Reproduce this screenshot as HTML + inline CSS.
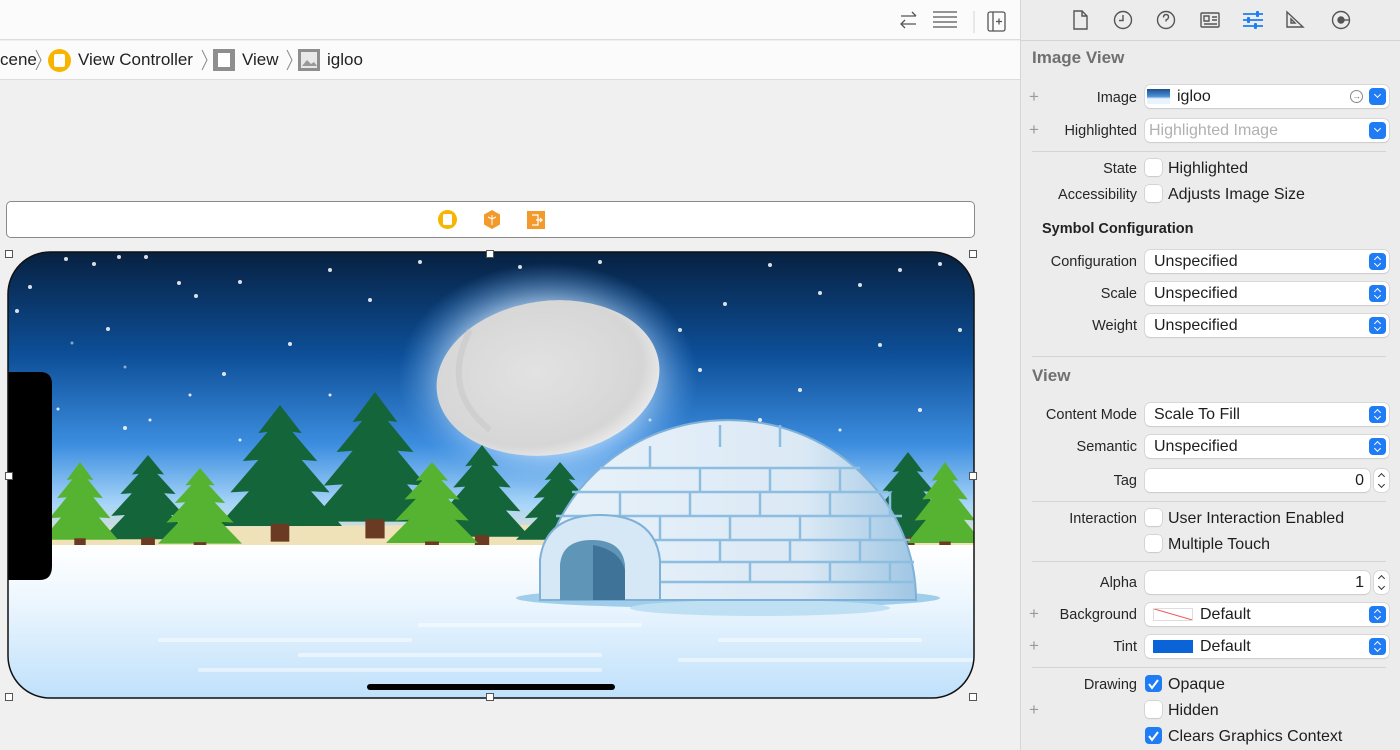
<!DOCTYPE html>
<html><head><meta charset="utf-8"><style>
*{box-sizing:border-box;margin:0;padding:0}
body{width:1400px;height:750px;overflow:hidden;background:#f0f0f0;font-family:"Liberation Sans",Arial,sans-serif;position:relative}
.abs{position:absolute}
.lbl{position:absolute;right:263px;font-size:14.5px;color:#262626;white-space:nowrap;line-height:18px;margin-top:1px}
.fld{position:absolute;left:1145px;width:244px;height:23px;background:#fff;border-radius:5px;box-shadow:0 0 0 .5px #c4c4c4,0 1px 1px rgba(0,0,0,.12);font-size:16px;color:#1e1e1e;line-height:24px;padding-left:9px;white-space:nowrap}
.btn{position:absolute;right:3px;top:3px;width:17px;height:17px;background:#1f7cf4;border-radius:4px}
.btn::after{content:"";position:absolute;left:6px;top:4px;width:4px;height:4px;border-right:1.5px solid #fff;border-bottom:1.5px solid #fff;transform:rotate(45deg)}
.btn.ud::after{top:8px}
.btn.ud::before{content:"";position:absolute;left:6px;top:4px;width:4px;height:4px;border-left:1.5px solid #fff;border-top:1.5px solid #fff;transform:rotate(45deg)}
.cb{position:absolute;left:1145px;width:17px;height:17px;background:#fff;border-radius:4px;box-shadow:0 0 0 .5px #bdbdbd,0 1px 1px rgba(0,0,0,.1)}
.cb.on{background:#1f7cf4;box-shadow:none}
.ct{position:absolute;left:1168px;font-size:16px;color:#1e1e1e;line-height:18px;white-space:nowrap;margin-top:1px}
.sep{position:absolute;left:1032px;width:354px;height:1px;background:#d4d4d4}
.plus{position:absolute;left:1029px;font-size:17px;color:#9a9a9a;line-height:18px}
.hd{position:absolute;left:1032px;font-size:17px;font-weight:bold;color:#707070}
.step{position:absolute;left:1374px;width:15px;height:23px;background:#fff;border-radius:5px;box-shadow:0 0 0 .5px #c4c4c4}
.step::before,.step::after{content:"";position:absolute;left:5px;width:4px;height:4px;border-left:1.3px solid #333;border-top:1.3px solid #333;transform:rotate(45deg)}
.step::before{top:5px}.step::after{top:13px;transform:rotate(225deg)}
</style></head><body>
<div class="abs" style="left:0;top:0;width:1020px;height:40px;background:#fbfbfb;border-bottom:1px solid #dcdcdc"></div>
<div class="abs" style="left:0;top:41px;width:1020px;height:39px;background:#fbfbfb;border-bottom:1px solid #dcdcdc"></div>
<svg class="abs" style="left:895px;top:8px" width="120" height="26" viewBox="0 0 120 26">
 <g fill="none" stroke="#555" stroke-width="1.3">
  <path d="M6 8h15M17 4l4 4M21 16H6M10 12l-4 4l4 4"/>
  <path d="M38 4h24M38 9h24M38 14h24M38 19h24"/>
  <path d="M79 3v22" stroke="#ddd"/>
  <rect x="93" y="4" width="17" height="19" rx="2"/><path d="M98 4v19M101 13.5h6M104 10.5v6"/>
 </g>
</svg>
<div class="abs" style="left:0;top:50px;font-size:17px;color:#222;white-space:nowrap;line-height:20px">cene</div>
<svg class="abs" style="left:34px;top:48px" width="340" height="26">
 <g fill="none" stroke="#888" stroke-width="1"><path d="M2 2l5 10l-5 10M168 2l5 10l-5 10M253 2l5 10l-5 10"/></g>
 <rect x="14" y="1" width="23" height="23" rx="11.5" fill="#f7b500"/><rect x="20" y="6" width="11" height="13" rx="2" fill="#fff"/>
 <rect x="179" y="1" width="22" height="22" fill="#8e8e8e"/><rect x="184" y="5" width="12" height="14" fill="#fff"/>
 <rect x="264" y="1" width="22" height="22" fill="#8e8e8e"/><rect x="267" y="4" width="16" height="16" fill="#e8e8e8"/><path d="M268 18l5-6l4 4l3-2l3 4z" fill="#999"/>
</svg>
<div class="abs" style="left:78px;top:50px;font-size:17px;color:#222;line-height:20px">View Controller</div>
<div class="abs" style="left:242px;top:50px;font-size:17px;color:#222;line-height:20px">View</div>
<div class="abs" style="left:327px;top:50px;font-size:17px;color:#222;line-height:20px">igloo</div>

<div class="abs" style="left:6px;top:201px;width:969px;height:37px;background:#fff;border:1px solid #8a8a8a;border-radius:5px"></div>
<svg class="abs" style="left:436px;top:208px" width="112" height="24">
 <rect x="2" y="2" width="19" height="19" rx="9.5" fill="#f7b500"/><rect x="7" y="6" width="9" height="11" rx="1.5" fill="#fff"/>
 <path d="M56 2l8 4.5v10L56 21l-8-4.5v-10z" fill="#f39a2c"/><path d="M56 7v10M52 9l4 2l4-2" stroke="#fff" fill="none" stroke-width="1"/>
 <rect x="91" y="3" width="18" height="18" fill="#f39a2c"/><path d="M96 7h6v10h-6M100 12h6M104 10l2 2l-2 2" stroke="#fff" fill="none" stroke-width="1.2"/>
</svg>

<svg class="abs" style="left:0;top:245px" width="1000" height="465" viewBox="0 245 1000 465">
 <defs>
  <linearGradient id="sky" x1="0" y1="0" x2="0" y2="1"><stop offset="0" stop-color="#07203f"/><stop offset=".35" stop-color="#0d4f98"/><stop offset=".65" stop-color="#3d8ee0"/><stop offset=".85" stop-color="#a9d6f8"/><stop offset="1" stop-color="#f1e5c2"/></linearGradient>
  <linearGradient id="snow" x1="0" y1="0" x2="0" y2="1"><stop offset="0" stop-color="#ffffff"/><stop offset=".3" stop-color="#f0f8fe"/><stop offset="1" stop-color="#bcdffb"/></linearGradient>
  <radialGradient id="moon" cx=".45" cy=".45" r=".6"><stop offset="0" stop-color="#e2e2e2"/><stop offset=".8" stop-color="#d6d6d6"/><stop offset="1" stop-color="#efefef"/></radialGradient>
  <radialGradient id="glow"><stop offset=".6" stop-color="#cfe8ff" stop-opacity=".8"/><stop offset="1" stop-color="#5aa0ea" stop-opacity="0"/></radialGradient>
  <linearGradient id="ig" x1="0" y1="0" x2="1" y2="0"><stop offset="0" stop-color="#e9f2fa"/><stop offset=".7" stop-color="#dbe9f5"/><stop offset="1" stop-color="#9fc6e4"/></linearGradient>
  <clipPath id="ph"><rect x="8" y="252" width="966" height="446" rx="42"/></clipPath>
  <g id="tr"><path d="M0 0L14 25L8 24L24 50L14 49L32 78L20 77L40 108L-40 108L-20 77L-32 78L-14 49L-24 50L-8 24L-14 25Z"/><rect x="-6" y="106" width="12" height="16" fill="#6b3a22"/></g>
 </defs>
 <g clip-path="url(#ph)">
  <rect x="0" y="250" width="1000" height="300" fill="url(#sky)"/>
  <g fill="#fff" opacity=".85">
   <circle cx="66" cy="259" r="2"/><circle cx="94" cy="264" r="2"/><circle cx="119" cy="257" r="2"/><circle cx="146" cy="257" r="2"/><circle cx="30" cy="287" r="2"/><circle cx="179" cy="283" r="2"/><circle cx="196" cy="296" r="2"/><circle cx="17" cy="311" r="2"/><circle cx="108" cy="329" r="2"/><circle cx="290" cy="344" r="2"/><circle cx="224" cy="374" r="2"/><circle cx="125" cy="428" r="2"/><circle cx="240" cy="282" r="2"/><circle cx="370" cy="300" r="2"/><circle cx="330" cy="270" r="2"/><circle cx="420" cy="262" r="2"/><circle cx="680" cy="330" r="2"/><circle cx="725" cy="304" r="2"/><circle cx="770" cy="265" r="2"/><circle cx="820" cy="293" r="2"/><circle cx="860" cy="285" r="2"/><circle cx="900" cy="270" r="2"/><circle cx="940" cy="264" r="2"/><circle cx="960" cy="330" r="2"/><circle cx="880" cy="345" r="2"/><circle cx="800" cy="390" r="2"/><circle cx="920" cy="410" r="2"/><circle cx="700" cy="370" r="2"/><circle cx="600" cy="262" r="2"/><circle cx="520" cy="267" r="2"/><circle cx="760" cy="420" r="2"/><circle cx="990" cy="300" r="2"/><circle cx="850" cy="240" r="2"/>
   <circle cx="72" cy="343" r="1.5" opacity=".6"/><circle cx="125" cy="367" r="1.5" opacity=".6"/><circle cx="58" cy="409" r="1.5"/><circle cx="150" cy="420" r="1.5"/><circle cx="240" cy="440" r="1.5"/><circle cx="330" cy="395" r="1.5"/><circle cx="190" cy="395" r="1.5"/><circle cx="620" cy="400" r="1.5"/><circle cx="650" cy="420" r="1.5"/><circle cx="840" cy="430" r="1.5"/>
  </g>
  <ellipse cx="548" cy="378" rx="150" ry="115" fill="url(#glow)"/>
  <ellipse cx="548" cy="378" rx="112" ry="77" fill="url(#moon)" transform="rotate(-8 548 378)"/>
  <path d="M470 330 q-30 60 20 100" stroke="#c6c6c6" stroke-width="6" fill="none" opacity=".5"/>
  <path d="M40 530 Q500 520 980 530 L980 560 L0 560Z" fill="#efe1b8"/>
  <g fill="#14663a">
   <use href="#tr" transform="translate(560,462) scale(1.1,0.72)"/>
   <use href="#tr" transform="translate(908,452) scale(1.1,0.8)"/>
   <use href="#tr" transform="translate(482,445) scale(1.2,0.85)"/>
   <use href="#tr" transform="translate(375,392) scale(1.6,1.2)"/>
   <use href="#tr" transform="translate(280,405) scale(1.55,1.12)"/>
   <use href="#tr" transform="translate(148,455) scale(1.15,0.78)"/>
  </g>
  <g fill="#56b331">
   <use href="#tr" transform="translate(80,462) scale(0.95,0.72)"/>
   <use href="#tr" transform="translate(200,468) scale(1.05,0.7)"/>
   <use href="#tr" transform="translate(432,462) scale(1.15,0.75)"/>
   <use href="#tr" transform="translate(945,462) scale(0.95,0.75)"/>
  </g>
  <rect x="0" y="545" width="1000" height="160" fill="url(#snow)"/>
  <g stroke="#fff" stroke-width="4" opacity=".5" stroke-linecap="round"><path d="M160 640h250M300 655h300M200 670h400M420 625h220M680 660h300M720 640h200"/></g>
  <ellipse cx="728" cy="598" rx="212" ry="10" fill="#9fcdea"/>
  <ellipse cx="760" cy="608" rx="130" ry="8" fill="#bfe0f3"/>
  <path d="M540 600 A188 180 0 0 1 916 600Z" fill="url(#ig)" stroke="#7fb1d8" stroke-width="2"/>
  <g stroke="#8dbddf" stroke-width="2.5" fill="none">
   <path d="M600 468 H860M572 492H888M556 516H902M546 540H910M542 562H914M542 582H915"/>
   <path d="M650 446v22M720 425v22M780 425v22M700 468v24M770 468v24M840 468v24M620 492v24M690 492v24M760 492v24M830 492v24M890 492v24M660 516v24M730 516v24M800 516v24M870 516v24M720 540v22M790 540v22M860 540v22M750 562v20M830 562v20M890 562v20"/>
  </g>
  <path d="M540 600 V560 Q545 515 600 515 Q655 515 660 560 V600Z" fill="#d6e8f5" stroke="#7fb1d8" stroke-width="2"/>
  <path d="M560 600 V565 Q562 540 592 540 Q622 540 625 565 V600Z" fill="#5f95b6"/>
  <path d="M593 600 V545 Q620 550 625 570 V600Z" fill="#3f7498"/>
  <rect x="367" y="684" width="248" height="6" rx="3" fill="#000"/>
  <path d="M0 372 H40 Q52 372 52 384 V566 Q52 580 40 580 H0Z" fill="#000"/>
 </g>
 <rect x="8" y="252" width="966" height="446" rx="42" fill="none" stroke="#111" stroke-width="1.5"/>
 <g fill="#fff" stroke="#555" stroke-width="1">
  <rect x="5.5" y="250.5" width="7" height="7"/><rect x="486.5" y="250.5" width="7" height="7"/><rect x="969.5" y="250.5" width="7" height="7"/>
  <rect x="5.5" y="472.5" width="7" height="7"/><rect x="969.5" y="472.5" width="7" height="7"/>
  <rect x="5.5" y="693.5" width="7" height="7"/><rect x="486.5" y="693.5" width="7" height="7"/><rect x="969.5" y="693.5" width="7" height="7"/>
 </g>
</svg>

<div class="abs" style="left:1020px;top:0;width:380px;height:750px;background:#ececec;border-left:1px solid #d6d6d6"></div>
<div class="abs" style="left:1021px;top:40px;width:379px;height:1px;background:#d4d4d4"></div>
<svg class="abs" style="left:1065px;top:6px" width="300" height="28">
 <g fill="none" stroke="#555" stroke-width="1.4">
  <path d="M9 5h8l5 5v13H9z M17 5v5h5"/>
  <circle cx="58" cy="14" r="8.5"/><path d="M58 9v5.5h-4"/>
  <circle cx="101" cy="14" r="8.5"/><path d="M98.5 11.5q0-3 2.5-3t2.5 2.5q0 2-2.5 3v1.5"/>
  <rect x="136" y="7" width="18" height="14" rx="1"/><path d="M139 10h5v5h-5zM147 11h5M147 14h5M139 18h13"/>
  <path d="M222 21V6L238 21ZM226 17h4l-4-4z"/>
  <circle cx="276" cy="14" r="8.5"/><path d="M276 14h9"/><circle cx="276" cy="14" r="3" fill="#555"/>
 </g>
 <g stroke="#1f7cf4" stroke-width="1.8"><path d="M178 8h20M178 14h20M178 20h20"/></g>
 <g fill="#1f7cf4"><rect x="191" y="5" width="3" height="6" rx="1"/><rect x="182" y="11" width="3" height="6" rx="1"/><rect x="189" y="17" width="3" height="6" rx="1"/></g>
</svg>

<div class="hd" style="top:48px">Image View</div>
<div class="plus" style="top:88px">+</div><div class="lbl" style="top:88px">Image</div>
<div class="fld" style="top:85px;padding-left:32px">igloo
 <div class="abs" style="left:2px;top:4px;width:23px;height:15px;background:linear-gradient(#1e4f8a,#4a90d8 50%,#e8f3fb 65%)"></div>
 <div class="abs" style="right:26px;top:5px;width:13px;height:13px;border:1px solid #888;border-radius:50%;font-size:9px;line-height:11px;text-align:center;color:#777">→</div>
 <div class="btn"></div></div>
<div class="plus" style="top:121px">+</div><div class="lbl" style="top:121px">Highlighted</div>
<div class="fld" style="top:119px;color:#b0b0b0;padding-left:4px">Highlighted Image<div class="btn"></div></div>
<div class="sep" style="top:151px"></div>
<div class="lbl" style="top:159px">State</div><div class="cb" style="top:159px"></div><div class="ct" style="top:159px">Highlighted</div>
<div class="lbl" style="top:185px">Accessibility</div><div class="cb" style="top:185px"></div><div class="ct" style="top:185px">Adjusts Image Size</div>
<div class="abs" style="left:1042px;top:221px;font-size:14.5px;font-weight:bold;color:#222">Symbol Configuration</div>
<div class="lbl" style="top:252px">Configuration</div><div class="fld" style="top:250px">Unspecified<div class="btn ud"></div></div>
<div class="lbl" style="top:284px">Scale</div><div class="fld" style="top:282px">Unspecified<div class="btn ud"></div></div>
<div class="lbl" style="top:316px">Weight</div><div class="fld" style="top:314px">Unspecified<div class="btn ud"></div></div>
<div class="sep" style="top:356px"></div>
<div class="hd" style="top:366px">View</div>
<div class="lbl" style="top:405px">Content Mode</div><div class="fld" style="top:403px">Scale To Fill<div class="btn ud"></div></div>
<div class="lbl" style="top:437px">Semantic</div><div class="fld" style="top:435px">Unspecified<div class="btn ud"></div></div>
<div class="lbl" style="top:471px">Tag</div><div class="fld" style="top:469px;width:225px;text-align:right;padding-right:6px">0</div><div class="step" style="top:469px"></div>
<div class="sep" style="top:501px"></div>
<div class="lbl" style="top:509px">Interaction</div><div class="cb" style="top:509px"></div><div class="ct" style="top:509px">User Interaction Enabled</div>
<div class="cb" style="top:535px"></div><div class="ct" style="top:535px">Multiple Touch</div>
<div class="sep" style="top:561px"></div>
<div class="lbl" style="top:573px">Alpha</div><div class="fld" style="top:571px;width:225px;text-align:right;padding-right:6px">1</div><div class="step" style="top:571px"></div>
<div class="plus" style="top:605px">+</div><div class="lbl" style="top:605px">Background</div>
<div class="fld" style="top:603px;padding-left:55px">Default<div class="abs" style="left:8px;top:5px;width:40px;height:13px;border:1px solid #ddd;background:linear-gradient(to top right,transparent 47%,#f06060 49%,#f06060 52%,transparent 54%)"></div><div class="btn ud"></div></div>
<div class="plus" style="top:637px">+</div><div class="lbl" style="top:637px">Tint</div>
<div class="fld" style="top:635px;padding-left:55px">Default<div class="abs" style="left:8px;top:5px;width:40px;height:13px;background:#0a64d8"></div><div class="btn ud"></div></div>
<div class="sep" style="top:667px"></div>
<div class="lbl" style="top:675px">Drawing</div><div class="cb on" style="top:675px"></div><div class="ct" style="top:675px">Opaque</div>
<div class="plus" style="top:701px">+</div><div class="cb" style="top:701px"></div><div class="ct" style="top:701px">Hidden</div>
<div class="cb on" style="top:727px"></div><div class="ct" style="top:727px">Clears Graphics Context</div>
<svg class="abs" style="left:1145px;top:675px" width="17" height="70"><g stroke="#fff" stroke-width="2" fill="none"><path d="M4 9l3 4l6-8M4 61l3 4l6-8"/></g></svg>
</body></html>
